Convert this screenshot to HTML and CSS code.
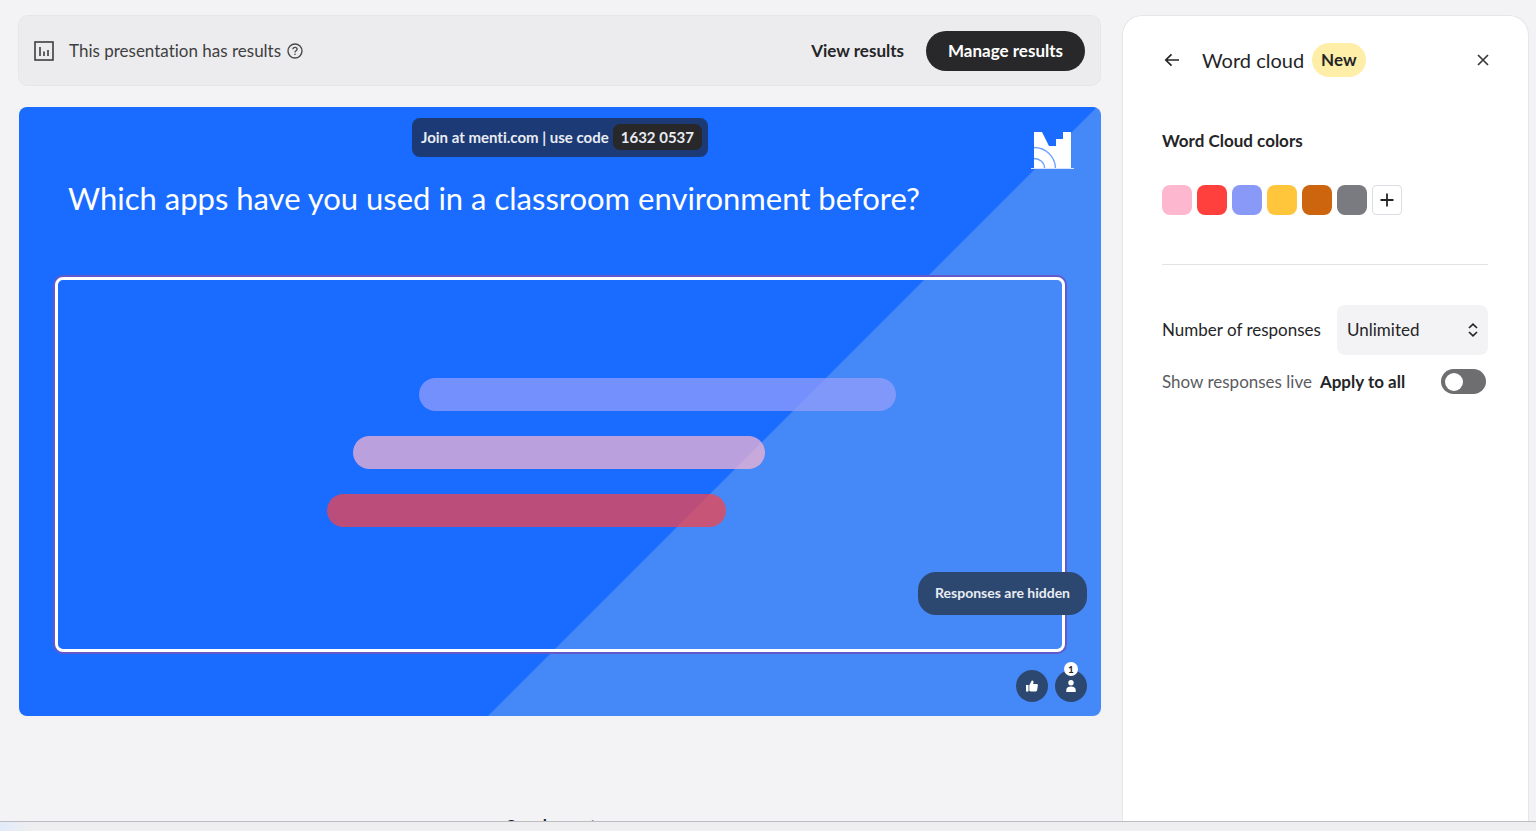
FILE: index.html
```html
<!DOCTYPE html>
<html lang="en">
    <head>
        <meta charset="UTF-8">
        <meta name="viewport" content="width=device-width, initial-scale=1.0">
        <title>Word cloud</title>
        <link rel="stylesheet" href="styles.css">
    </head>
    <body>
        <div class="workspace">
            <main class="editor">
                <div class="results-bar">
                    <svg class="chart-icon" width="20" height="20" viewBox="0 0 20 20" fill="none" stroke="#3f3f42" stroke-width="1.6">
                        <rect x="1" y="1" width="18" height="18"/>
                        <path d="M6 6v9M10 10.500v4.500M14 9v6"/>
                    </svg>
                    <span class="results-text">This presentation has results</span>
                    <svg width="16" height="16" viewBox="0 0 16 16" fill="none" stroke="#4a4a4d" stroke-width="1.4">
                        <circle cx="8" cy="8" r="7"/>
                        <path d="M5.900 6.300C6 5 6.900 4.400 8 4.400s2.100.7 2.100 1.800C10.100 7.700 8 7.700 8 9.400"/>
                        <path d="M8 10.700v1.400"/>
                    </svg>
                    <button class="view-results">View results</button>
                    <button class="manage-results">Manage results</button>
                </div>

                <section class="slide">
                    <div class="slide-top">
                        <div class="join">Join at menti.com | use code <span class="code">1632 0537</span></div>
                        <svg class="logo" width="44" height="38" viewBox="0 0 44 38">
                            <path fill="#fff" d="M3 0h8l7 14h7V7h7V0h8v36H3z"/>
                            <path d="M0 36.500h43" stroke="#d5e4ff" stroke-width="1"/>
                            <path d="M3 15.500c12 0 21 9 21.500 20.500M3 26.500c6 0 10.500 4 10.500 9.500" fill="none" stroke="#6da1ff" stroke-width="1.3"/>
                        </svg>
                    </div>
                    <h1>Which apps have you used in a classroom environment before?</h1>
                    <div class="cloud">
                        <div class="bar lilac"></div>
                        <div class="bar pink"></div>
                        <div class="bar red"></div>
                    </div>
                    <div class="hidden-note">Responses are hidden</div>
                    <div class="slide-bottom">
                        <button class="round" aria-label="Reactions">
                            <svg width="12" height="12" viewBox="0 0 12 12" fill="#fff">
                                <path d="M0 5h2.500v6.500H0zM3.300 5.200L5.800.6c1.400-.2 1.900.8 1.700 1.700L7.100 4h3.700c.8 0 1.200.6 1.100 1.300l-.8 5c-.1.700-.6 1.200-1.300 1.200H4.900l-1.600-.7z"/>
                            </svg>
                        </button>
                        <button class="round" aria-label="Participants">
                            <svg width="10" height="12" viewBox="0 0 10 12" fill="#fff">
                                <circle cx="5" cy="2.800" r="2.700"/>
                                <path d="M.3 12v-2C.3 7.800 2 6.500 5 6.500s4.700 1.300 4.700 3.500v2z"/>
                            </svg>
                            <span class="count">1</span>
                        </button>
                    </div>
                </section>

                <button class="notes">Speaker notes</button>
            </main>

            <aside class="panel">
                <header class="panel-head">
                    <button class="icon-button" aria-label="Back">
                        <svg width="20" height="20" viewBox="0 0 20 20" fill="none" stroke="#252527" stroke-width="1.7">
                            <path d="M17 10H4M9.500 4.300L3.800 10l5.700 5.700"/>
                        </svg>
                    </button>
                    <h2>Word cloud</h2>
                    <span class="new">New</span>
                    <button class="icon-button close" aria-label="Close">
                        <svg width="12" height="12" viewBox="0 0 12 12" fill="none" stroke="#3a3a3c" stroke-width="1.7">
                            <path d="M1 1l10 10M11 1L1 11"/>
                        </svg>
                    </button>
                </header>

                <h3>Word Cloud colors</h3>
                <div class="swatches">
                    <button class="swatch s-pink" aria-label="Pink"></button>
                    <button class="swatch s-red" aria-label="Red"></button>
                    <button class="swatch s-lilac" aria-label="Lilac"></button>
                    <button class="swatch s-yellow" aria-label="Yellow"></button>
                    <button class="swatch s-orange" aria-label="Orange"></button>
                    <button class="swatch s-gray" aria-label="Gray"></button>
                    <button class="swatch add" aria-label="Add color">
                        <svg width="14" height="14" viewBox="0 0 14 14" stroke="#252527" stroke-width="1.8">
                            <path d="M7 .5v13M.5 7h13"/>
                        </svg>
                    </button>
                </div>
                <hr>

                <div class="row">
                    <label for="responses">Number of responses</label>
                    <div class="select">
                        <select id="responses">
                            <option>Unlimited</option>
                            <option>1</option>
                            <option>2</option>
                            <option>3</option>
                        </select>
                        <svg width="10" height="14" viewBox="0 0 10 14" fill="none" stroke="#252527" stroke-width="1.7">
                            <path d="M1 5l4-3.800L9 5M1 9l4 3.800L9 9"/>
                        </svg>
                    </div>
                </div>
                <div class="row live">
                    <label for="live">Show responses live</label>
                    <button class="apply">Apply to all</button>
                    <input type="checkbox" id="live">
                </div>
            </aside>
        </div>
        <footer class="status"></footer>
    </body>
</html>
```

FILE: styles.css
```css
*{
    box-sizing: border-box;
}
body{
    margin: 0;
    height: 100vh;
    display: flex;
    flex-direction: column;
    background-color: #f3f3f5;
    color: #252527;
    font-family: Lato, "Liberation Sans", sans-serif;
    font-size: 17px;
    line-height: 24px;
    font-variant-ligatures: none;
}
h1, h2, h3{
    margin: 0;
}
button, select{
    border: none;
    padding: 0;
    background: none;
    font: inherit;
    color: inherit;
    cursor: pointer;
}
svg{
    display: block;
    flex-shrink: 0;
}
.workspace{
    flex: 1;
    min-height: 0;
    display: flex;
    gap: 21px;
    padding: 15px 7px 0 18px;
    overflow: hidden;
}
.editor{
    flex: 1;
    min-width: 0;
}

/* results bar */
.results-bar{
    display: flex;
    align-items: center;
    height: 71px;
    padding: 0 15px;
    margin-bottom: 21px;
    background-color: #ececee;
    border: 1px solid #e6e6e9;
    border-radius: 10px;
}
.results-text{
    margin: 0 6px 0 15px;
    color: #3f3f42;
}
.view-results{
    margin-left: auto;
    font-weight: bold;
}
.manage-results{
    height: 40px;
    padding: 0 22px;
    margin-left: 22px;
    border-radius: 20px;
    background-color: #28282a;
    color: white;
    font-weight: bold;
}

/* slide */
.slide{
    position: relative;
    display: flex;
    flex-direction: column;
    aspect-ratio: 16 / 9;
    margin-left: 1px;
    padding: 11px 14px 14px 36px;
    border-radius: 8px;
    background: linear-gradient(135deg, #196cff 63.7%, #4588f7 63.8%);
    color: white;
}
.slide-top{
    display: grid;
    grid-template-columns: 1fr auto 1fr;
    padding-right: 22px;
}
.join{
    grid-column: 2;
    display: flex;
    align-items: center;
    gap: 4px;
    height: 39px;
    padding: 0 6px 2px 9px;
    border-radius: 8px;
    background-color: #1c3a75;
    color: #e9ecf2;
    font-size: 15px;
    font-weight: bold;
}
.code{
    padding: 1px 8px;
    border-radius: 7px;
    background-color: #28282a;
}
.logo{
    justify-self: end;
    margin: 14px -10px 0 0;
}
h1{
    margin: 8px 0 59px 13px;
    font-size: 31px;
    font-weight: normal;
    line-height: 40px;
}
.cloud{
    flex: 1;
    display: flex;
    flex-direction: column;
    justify-content: center;
    gap: 25px;
    margin: 0 22px 18px 0;
    padding-bottom: 24px;
    border: 3px solid white;
    border-radius: 8px;
    box-shadow: 0 0 0 2px #6558c8;
}
.bar{
    height: 33px;
    border-radius: 17px;
    opacity: 0.7;
}
.lilac{
    width: 47.5%;
    margin-left: 36%;
    background-color: #9aa0fb;
}
.pink{
    width: 41%;
    margin-left: 29.4%;
    background-color: #ffb8d0;
}
.red{
    width: 39.7%;
    margin-left: 26.8%;
    background-color: #ff4040;
}
.hidden-note{
    position: absolute;
    right: 14px;
    bottom: 101px;
    padding: 9px 17px 10px;
    border-radius: 18px;
    background-color: #2d4870;
    color: #e9ecf2;
    font-size: 14px;
    font-weight: bold;
}
.slide-bottom{
    display: flex;
    justify-content: flex-end;
    gap: 7px;
}
.round{
    position: relative;
    display: flex;
    align-items: center;
    justify-content: center;
    width: 32px;
    height: 32px;
    border-radius: 50%;
    background-color: #2d4870;
}
.count{
    position: absolute;
    top: -8px;
    left: 9px;
    width: 14px;
    height: 14px;
    border-radius: 50%;
    background-color: white;
    color: #252527;
    font-size: 10px;
    font-weight: bold;
    line-height: 14px;
}
.notes{
    display: block;
    margin: 98px auto 0;
    font-weight: bold;
}

/* side panel */
.panel{
    width: 407px;
    flex-shrink: 0;
    padding: 27px 40px 0 39px;
    background-color: white;
    border: 1px solid #e6e6e9;
    border-bottom: none;
    border-radius: 20px 20px 0 0;
}
.panel-head{
    display: flex;
    align-items: center;
    height: 34px;
}
.icon-button{
    display: flex;
    align-items: center;
    justify-content: center;
    width: 20px;
    height: 20px;
}
.close{
    margin-left: auto;
    margin-right: -5px;
}
h2{
    margin: 0 8px 0 20px;
    font-size: 20px;
    font-weight: normal;
}
.new{
    padding: 5px 9px;
    border-radius: 17px;
    background-color: #ffeea8;
    font-weight: bold;
}
h3{
    margin: 52px 0 32px;
    font-size: 17px;
}
.swatches{
    display: flex;
    gap: 5px;
}
.swatch{
    width: 30px;
    height: 30px;
    border-radius: 8px;
}
.s-pink{
    background-color: #fdb7cf;
}
.s-red{
    background-color: #ff403d;
}
.s-lilac{
    background-color: #8899f8;
}
.s-yellow{
    background-color: #ffc63b;
}
.s-orange{
    background-color: #cc650e;
}
.s-gray{
    background-color: #797b80;
}
.add{
    display: flex;
    align-items: center;
    justify-content: center;
    border: 1px solid #dcdce2;
    border-radius: 4px;
}
hr{
    height: 1px;
    margin: 49px 0 40px;
    border: none;
    background-color: #e3e3e6;
}
.row{
    display: flex;
    align-items: center;
}
.select{
    position: relative;
    width: 151px;
    margin-left: auto;
}
.select select{
    appearance: none;
    width: 100%;
    height: 50px;
    padding: 0 10px;
    border-radius: 8px;
    background-color: #f3f3f5;
}
.select svg{
    position: absolute;
    right: 10px;
    top: 18px;
    pointer-events: none;
}
.live{
    margin-top: 14px;
}
.live label{
    color: #5b5b60;
}
.apply{
    margin-left: 8px;
    font-weight: bold;
}
#live{
    appearance: none;
    display: flex;
    align-items: center;
    width: 45px;
    height: 25px;
    margin: 0 2px 0 auto;
    padding: 0 4px;
    border-radius: 13px;
    background-color: #6e6e70;
    cursor: pointer;
}
#live::before{
    content: "";
    width: 18px;
    height: 18px;
    border-radius: 50%;
    background-color: white;
}
#live:checked{
    justify-content: flex-end;
    background-color: #196cff;
}

.status{
    height: 10px;
    border-top: 1px solid #bdbdc1;
    background: linear-gradient(to right, #e2ebfb, #eeeef0 30px);
}
```
